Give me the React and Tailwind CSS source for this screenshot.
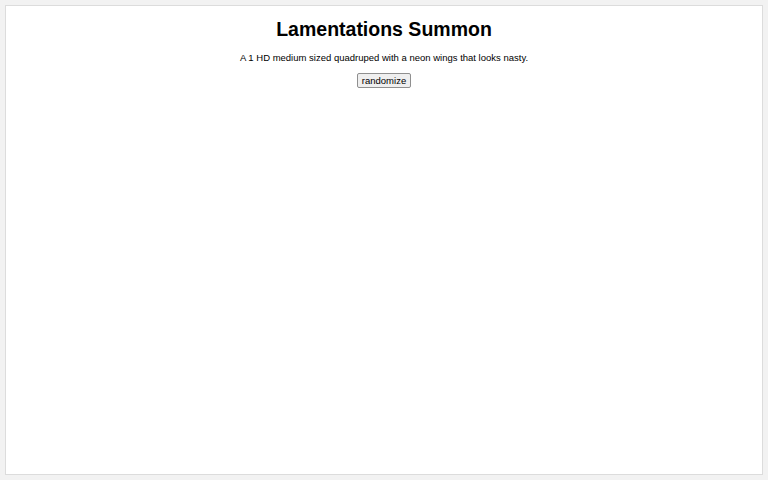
import React, { useState } from "react";

const sizes = ["small", "medium", "large"];
const forms = ["quadruped", "biped", "serpent", "blob"];
const features = ["a neon wings", "many eyes", "a long tail", "horns"];
const looks = ["nasty", "sad", "hungry", "strange"];

const pick = (list) => list[Math.floor(Math.random() * list.length)];

export default function App() {
  const [summon, setSummon] = useState({
    hd: 1,
    size: "medium",
    form: "quadruped",
    feature: "a neon wings",
    look: "nasty",
  });

  const randomize = () => {
    setSummon({
      hd: 1 + Math.floor(Math.random() * 6),
      size: pick(sizes),
      form: pick(forms),
      feature: pick(features),
      look: pick(looks),
    });
  };

  return (
    <div className="w-[768px] h-[480px] bg-[#f2f2f2] p-[5px] font-['Liberation_Sans',Arial,sans-serif]">
      <div className="h-full bg-white border border-[#dcdcdc] flex flex-col items-center pt-[10px]">
        <h1 className="text-[19.5px] leading-[26px] font-bold text-black">
          Lamentations Summon
        </h1>
        <p className="mt-[10px] text-[9.5px] leading-[12px] text-black">
          A {summon.hd} HD {summon.size} sized {summon.form} with {summon.feature} that looks {summon.look}.
        </p>
        <button
          onClick={randomize}
          className="mt-[9px] h-[15px] px-[4px] text-[9.5px] leading-[12px] text-black bg-[#efefef] border border-[#8f8f8f] rounded-[2px]"
        >
          randomize
        </button>
      </div>
    </div>
  );
}
